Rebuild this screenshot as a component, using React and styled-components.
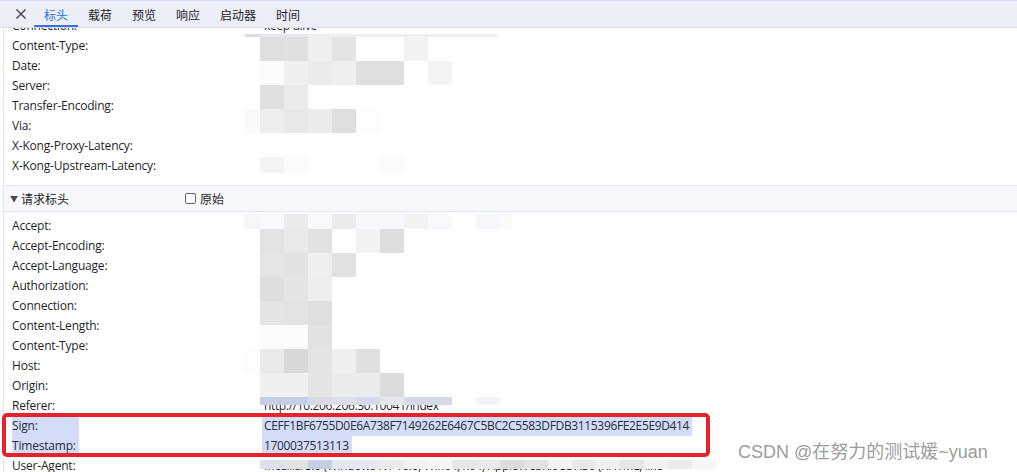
import React from "react";
import styled, { createGlobalStyle } from "styled-components";

const GlobalStyle = createGlobalStyle`
	html, body {
		margin: 0;
		padding: 0;
		background: #fff;
	}
	body {
		font-family: "Open Sans", "Noto Sans CJK SC", sans-serif;
		font-size: 12px;
		color: #1f1f1f;
	}
`;

const Page = styled.div`
	position: relative;
	width: 1017px;
	height: 472px;
	overflow: hidden;
	display: flex;
	flex-direction: column;
`;

const TabBar = styled.div`
	position: relative;
	z-index: 2;
	flex: none;
	height: 26px;
	display: flex;
	align-items: stretch;
	background: #eceef8;
	border-top: 1px solid #d6ddf3;
	border-bottom: 1px solid #d6ddf3;
`;

const Close = styled.button`
	width: 34px;
	padding: 0 0 0 16px;
	border: 0;
	background: none;
	display: flex;
	align-items: center;
`;

const Tab = styled.div`
	padding: 0 10px;
	display: flex;
	align-items: center;
	font-family: "Noto Sans CJK SC", sans-serif;
	color: ${(p) => (p.$active ? "#2f6ee0" : "#1f1f1f")};
	box-shadow: ${(p) => (p.$active ? "inset 0 -2px 0 #3b6fdc" : "none")};
`;

const Body = styled.div`
	flex: 1;
	overflow: hidden;
	margin-left: 3px;
	border-left: 1px solid #e3e6ef;
`;

const Scroller = styled.div`
	margin-top: -13px;
`;

const List = styled.div`
	padding: ${(p) => p.$pad};
`;

const Row = styled.div`
	display: grid;
	grid-template-columns: 250px 1fr;
	height: 20px;
	line-height: 20px;
	padding-left: 8px;
	white-space: nowrap;
`;

const Name = styled.span`
	position: relative;
	top: 1px;
	letter-spacing: -0.2px;
	overflow: hidden;
`;

const Value = styled.span`
	position: relative;
	top: 1px;
	padding-left: 2px;
	letter-spacing: -0.35px;
	overflow: hidden;
`;

const Picked = styled.span`
	display: inline-block;
	box-sizing: border-box;
	height: 20px;
	background: #d3ddf7;
	margin-left: ${(p) => (p.$label ? "-4px" : "-2px")};
	padding: 0 3px 0 ${(p) => (p.$label ? "4px" : "2px")};
	min-width: ${(p) => p.$min || "0"};
	color: #2a2d3a;
`;

const SectionHeader = styled.div`
	height: 25px;
	display: flex;
	align-items: center;
	padding-left: 6px;
	background: #f7f8fc;
	border-top: 1px solid #dfe5f4;
	border-bottom: 1px solid #dfe5f4;
`;

const Title = styled.div`
	width: 175px;
	display: flex;
	align-items: center;
	font-family: "Noto Sans CJK SC", sans-serif;
`;

const Arrow = styled.span`
	width: 11px;
	font-size: 8px;
	color: #4a4a4a;
`;

const Raw = styled.label`
	display: flex;
	align-items: center;
	gap: 4px;
	font-family: "Noto Sans CJK SC", sans-serif;
`;

const Box = styled.span`
	width: 9px;
	height: 9px;
	border: 1px solid #5f6368;
	border-radius: 2px;
	background: #fff;
`;

const Mosaic = styled.svg`
	position: absolute;
	top: 0;
	left: 0;
	z-index: 1;
	pointer-events: none;
`;

const Mark = styled.div`
	position: absolute;
	z-index: 3;
	left: 2px;
	top: 413px;
	width: 700px;
	height: 36px;
	border: 4px solid #e8222c;
	border-radius: 5px;
`;

const Watermark = styled.div`
	position: absolute;
	z-index: 4;
	left: 738px;
	top: 440px;
	line-height: 24px;
	font-family: "Liberation Sans", "Noto Sans CJK SC", sans-serif;
	font-size: 18px;
	color: #9c9c9c;
	text-shadow: 0 0 1px #fff;
	white-space: nowrap;
`;

const response = [
	["Connection:", "keep-alive"],
	["Content-Type:"],
	["Date:"],
	["Server:"],
	["Transfer-Encoding:"],
	["Via:"],
	["X-Kong-Proxy-Latency:"],
	["X-Kong-Upstream-Latency:"],
];

const request = [
	["Accept:"],
	["Accept-Encoding:"],
	["Accept-Language:"],
	["Authorization:"],
	["Connection:"],
	["Content-Length:"],
	["Content-Type:"],
	["Host:"],
	["Origin:"],
	["Referer:", "http://10.206.206.30:10041/index"],
	["Sign:", "CEFF1BF6755D0E6A738F7149262E6467C5BC2C5583DFDB3115396FE2E5E9D414", "71px"],
	["Timestamp:", "1700037513113", "69px"],
	["User-Agent:", "Mozilla/5.0 (Windows NT 10.0; Win64; x64) AppleWebKit/537.36 (KHTML, like"],
];

// pixelated redaction: [x, y, w, h, colour]
const cells = [
	[245, 34, 15, 3, "#dadbe3"], [260, 34, 48, 3, "#e6e7f0"], [308, 34, 190, 3, "#eeeff7"],
	[260, 37, 24, 24, "#dfdfdf"], [284, 37, 24, 24, "#e0e0e0"], [308, 37, 24, 24, "#efefef"],
	[332, 37, 24, 24, "#e4e4e4"], [404, 37, 24, 24, "#f2f2f2"],
	[260, 61, 24, 24, "#fbfbfb"], [284, 61, 24, 24, "#f0f0f0"], [308, 61, 24, 24, "#ececec"],
	[332, 61, 24, 24, "#efefef"], [356, 61, 48, 24, "#dfdfdf"], [428, 61, 24, 24, "#f4f4f4"],
	[260, 85, 24, 24, "#e0e0e0"], [284, 85, 24, 24, "#ebebeb"],
	[245, 109, 15, 24, "#fafafa"], [260, 109, 24, 24, "#eceeed"], [284, 109, 24, 24, "#e8e8e8"],
	[308, 109, 24, 24, "#ececec"], [332, 109, 24, 24, "#dfdfdf"], [356, 109, 24, 24, "#fdfdfd"],
	[260, 157, 24, 16, "#f4f4f4"], [284, 157, 24, 16, "#fafbfd"], [380, 157, 24, 16, "#fafbfd"],

	[244, 214, 16, 15, "#f7f7f7"], [260, 214, 24, 15, "#f8f9fe"], [284, 214, 24, 15, "#ebebeb"],
	[308, 214, 24, 15, "#f8f9fe"], [332, 214, 24, 15, "#ebebeb"], [356, 214, 48, 15, "#f6f7fb"],
	[404, 214, 24, 15, "#f2f2f2"], [428, 214, 24, 15, "#f8f9fe"], [476, 214, 24, 15, "#f7f7fb"],
	[500, 214, 12, 15, "#fafafa"],
	[260, 229, 24, 24, "#e3e3e3"], [284, 229, 24, 24, "#e9e9e9"], [308, 229, 24, 24, "#e2e2e2"],
	[356, 229, 24, 24, "#f2f2f2"], [380, 229, 24, 24, "#dedede"],
	[260, 253, 24, 24, "#e5e5e5"], [284, 253, 24, 24, "#e2e2e2"], [308, 253, 24, 24, "#efefef"],
	[332, 253, 24, 24, "#e1e1e1"],
	[260, 277, 24, 24, "#dedede"], [284, 277, 24, 24, "#e4e4e4"], [308, 277, 24, 24, "#eeeeee"],
	[260, 301, 24, 24, "#e4e4e4"], [284, 301, 24, 24, "#e3e3e3"], [308, 301, 24, 24, "#dfdfdf"],
	[260, 325, 24, 24, "#fcfcfc"], [284, 325, 24, 24, "#fcfcfc"], [308, 325, 24, 24, "#e2e2e2"],
	[244, 349, 16, 24, "#fdfdfd"], [260, 349, 24, 24, "#eaeaea"], [284, 349, 24, 24, "#d8d8d8"],
	[308, 349, 24, 24, "#e4e4e4"], [332, 349, 24, 24, "#efefef"], [356, 349, 24, 24, "#e0e0e0"],
	[260, 373, 24, 24, "#f0f0f0"], [284, 373, 24, 24, "#f0f0f0"], [308, 373, 24, 24, "#e4e4e4"],
	[332, 373, 24, 24, "#ebebeb"], [356, 373, 24, 24, "#ebebeb"], [380, 373, 24, 24, "#dcdcdc"],
	[260, 397, 48, 8, "#c6cde6"], [308, 397, 24, 8, "#d9dae3"], [332, 397, 24, 8, "#dcdee8"],
	[356, 397, 24, 8, "#d5d9ea"], [380, 397, 24, 8, "#e6e7ee"], [404, 397, 48, 8, "#d6dae8"],
	[476, 397, 24, 8, "#f4f5fc"],

	[260, 460, 24, 9, "#dde1ee"], [284, 460, 24, 9, "#e3e3e3"], [308, 460, 24, 9, "#c6cde6"],
	[332, 460, 48, 9, "#e6e9f2"], [380, 460, 24, 9, "#ececec"], [404, 460, 24, 9, "#f3f3f3"],
	[428, 460, 24, 9, "#f6f6f6"], [452, 460, 24, 9, "#e6e6e6"], [476, 460, 24, 9, "#eaeaea"],
	[500, 460, 24, 9, "#dcdcdc"], [524, 460, 24, 9, "#e4e4e4"], [548, 460, 24, 9, "#f4f4f4"],
	[572, 460, 24, 9, "#e9e9e9"], [596, 460, 24, 9, "#f0f0f0"], [620, 460, 24, 9, "#e6e6e6"],
	[644, 460, 24, 9, "#f2f2f2"], [668, 460, 24, 9, "#ebebeb"], [692, 460, 24, 9, "#f6f6f6"],
];

const HeaderRow = ({ name, value, pick }) => (
	<Row>
		<Name>
			{pick ? (
				<Picked $label $min={pick}>
					{name}
				</Picked>
			) : (
				name
			)}
		</Name>
		<Value>{pick ? <Picked>{value}</Picked> : value}</Value>
	</Row>
);

const tabs = ["标头", "载荷", "预览", "响应", "启动器", "时间"];

const App = () => {
	return (
		<Page>
			<GlobalStyle />
			<TabBar>
				<Close aria-label="close">
					<svg width="10" height="10" viewBox="0 0 10 10">
						<path d="M0.5 0.5 L9.5 9.5 M9.5 0.5 L0.5 9.5" stroke="#3c3c3c" strokeWidth="1.3" fill="none" />
					</svg>
				</Close>
				{tabs.map((t, i) => (
					<Tab key={t} $active={i === 0}>
						{t}
					</Tab>
				))}
			</TabBar>

			<Body>
				<Scroller>
					<List $pad="0 0 10px">
						{response.map(([n, v]) => (
							<HeaderRow key={n} name={n} value={v} />
						))}
					</List>
					<SectionHeader>
						<Title>
							<Arrow>▼</Arrow>
							请求标头
						</Title>
						<Raw>
							<Box />
							原始
						</Raw>
					</SectionHeader>
					<List $pad="3px 0 0">
						{request.map(([n, v, pick]) => (
							<HeaderRow key={n} name={n} value={v} pick={pick} />
						))}
					</List>
				</Scroller>
			</Body>

			<Mosaic width="1017" height="472" viewBox="0 0 1017 472">
				{cells.map(([x, y, w, h, c], i) => (
					<rect key={i} x={x} y={y} width={w} height={h} fill={c} />
				))}
			</Mosaic>

			<Mark />
			<Watermark>CSDN @在努力的测试媛~yuan</Watermark>
		</Page>
	);
};

export default App;
